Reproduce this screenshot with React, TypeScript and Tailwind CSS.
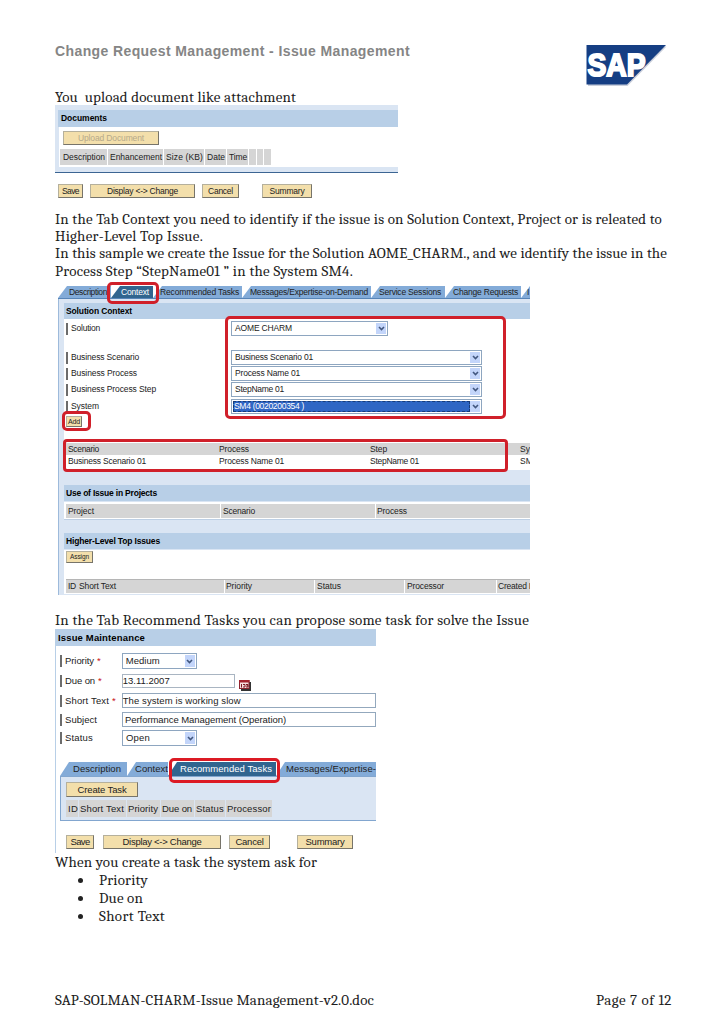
import { useLayoutEffect, useRef } from "react";
import type { ReactNode } from "react";

/** A single line of text whose tracking is spread over a fixed measure. */
function Fit({ w, children, className = "" }: { w: number; children: string; className?: string }) {
  const ref = useRef<HTMLSpanElement>(null);
  useLayoutEffect(() => {
    const el = ref.current;
    if (!el) return;
    el.style.letterSpacing = "0px";
    const natural = el.getBoundingClientRect().width;
    el.style.letterSpacing = `${(w - natural) / children.length}px`;
  }, [w, children]);
  return (
    <span ref={ref} className={"inline-block shrink-0 whitespace-pre " + className}>
      {children}
    </span>
  );
}

function Button({ w, className, children }: { w: number; className: string; children: string }) {
  return (
    <div
      className={
        "flex shrink-0 items-center justify-center border border-[#b5b09c] border-r-[#77746a] border-b-[#77746a] bg-[#f3dfab] leading-none " +
        className
      }
    >
      <Fit w={w}>{children}</Fit>
    </div>
  );
}

function Chevron({ className }: { className: string }) {
  return (
    <span className={"flex shrink-0 items-center justify-center bg-[#c3d5fa] " + className}>
      <svg width="7" height="5" viewBox="0 0 7 5">
        <path d="M1 1 L3.5 3.5 L6 1" fill="none" stroke="#42577f" strokeWidth="1.6" />
      </svg>
    </span>
  );
}

function Select({ w, className, children, selected }: { w: number; className: string; children: string; selected?: boolean }) {
  return (
    <div className={"flex shrink-0 items-center border border-[#8ea6c0] bg-white p-px leading-none " + className}>
      {selected ? (
        <span className="flex h-full grow items-center border border-dashed border-[#183c78] bg-[#2f66c4] text-white">
          <Fit w={w}>{children}</Fit>
        </span>
      ) : (
        <span className="flex grow items-center pl-[2px]">
          <Fit w={w}>{children}</Fit>
        </span>
      )}
      <Chevron className="h-full w-[10px]" />
    </div>
  );
}

function Tab({ w, className, children }: { w: number; className: string; children: string }) {
  return (
    <div
      className={
        "flex shrink-0 items-center overflow-hidden leading-none [clip-path:polygon(9px_0,100%_0,100%_100%,0_100%)] " + className
      }
    >
      <Fit w={w}>{children}</Fit>
    </div>
  );
}

function Field({ w, label, className, required, children }: { w: number; label: string; className: string; required?: boolean; children?: ReactNode }) {
  return (
    <div className={"flex shrink-0 items-center leading-none " + className}>
      <div className="flex h-full shrink-0 items-center">
        <span className="h-[12px] w-[2px] bg-[#6c6c6c]" />
        <Fit w={w} className="ml-[3px]">{label}</Fit>
        {required && <span className="ml-[3px] text-[#c81420]">*</span>}
      </div>
      {children}
    </div>
  );
}

function Cell({ w, className, children }: { w: number; className: string; children: string }) {
  return (
    <div className={"flex h-full shrink-0 items-center overflow-hidden bg-[#d5d5d5] leading-none " + className}>
      {children && <Fit w={w}>{children}</Fit>}
    </div>
  );
}

function Documents() {
  return (
    <section className="flex h-[105px] w-[343px] flex-col text-[8.5px] text-[#222]">
      <div className="flex h-[68px] flex-col border-b border-[#3b6593] bg-[#dae5f3] pt-[5px] pl-[3px]">
        <div className="flex h-[17px] shrink-0 items-center bg-[#b8cfe7] pl-[3px] font-bold text-black">
          <Fit w={46}>Documents</Fit>
        </div>
        <div className="ml-px flex h-[40px] shrink-0 flex-col bg-white pt-[4px]">
          <Button w={66} className="ml-[4px] h-[14px] w-[96px] text-[#b5a98a]">Upload Document</Button>
          <div className="mt-[4px] ml-[1px] flex h-[16px] gap-px">
            <Cell w={42} className="w-[47px] pl-[3px]">Description</Cell>
            <Cell w={52} className="w-[55px] pl-[2px]">Enhancement</Cell>
            <Cell w={37} className="w-[40px] pl-[2px]">Size (KB)</Cell>
            <Cell w={18} className="w-[21px] pl-[2px]">Date</Cell>
            <Cell w={18} className="w-[21px] pl-[2px]">Time</Cell>
            <Cell w={0} className="w-[7px]">{""}</Cell>
            <Cell w={0} className="w-[6px]">{""}</Cell>
            <Cell w={0} className="w-[7px]">{""}</Cell>
          </div>
        </div>
      </div>
      <div className="mt-[11px] ml-[3px] flex h-[14px]">
        <Button w={17} className="w-[25px]">Save</Button>
        <Button w={71} className="ml-[7px] w-[105px]">{"Display <-> Change"}</Button>
        <Button w={25} className="ml-[7px] w-[37px]">Cancel</Button>
        <Button w={35} className="ml-[23px] w-[50px]">Summary</Button>
      </div>
    </section>
  );
}

function SolutionContext() {
  return (
    <section className="relative flex h-[310px] w-[475px] flex-col pl-[3px] text-[8.5px] text-[#222]">
      <div className="flex h-[14px] shrink-0 items-stretch overflow-hidden border-b border-[#5785b8] pt-[1px]">
        <Tab w={38} className="w-[53px] bg-[#83abd8] pl-[11px]">Description</Tab>
        <Tab w={28} className="w-[42px] bg-[#31658f] pl-[10px] text-white">Context</Tab>
        <Tab w={79} className="w-[89px] bg-[#83abd8] pl-[7px]">Recommended Tasks</Tab>
        <Tab w={118} className="w-[129px] bg-[#83abd8] pl-[8px]">Messages/Expertise-on-Demand</Tab>
        <Tab w={62} className="w-[74px] bg-[#83abd8] pl-[8px]">Service Sessions</Tab>
        <Tab w={65} className="w-[76px] bg-[#83abd8] pl-[8px]">Change Requests</Tab>
        <Tab w={2} className="w-[9px] bg-[#83abd8] pl-[6px]">I</Tab>
      </div>
      <div className="flex h-[296px] flex-col overflow-hidden border-l border-[#9dbadb] bg-[#dae5f3] pt-[4px] pl-[5px]">
        <div className="flex h-[16px] shrink-0 items-center bg-[#b8cfe7] pl-[2px] font-bold text-black">
          <Fit w={66}>Solution Context</Fit>
        </div>
        <div className="flex h-[151px] shrink-0 flex-col bg-white pl-[2px]">
          <Field w={29} label="Solution" className="mt-[2px] h-[15px]">
            <Select w={57} className="ml-[131px] h-[15px] w-[157px]">AOME CHARM</Select>
          </Field>
          <Field w={68} label="Business Scenario" className="mt-[14px] h-[15px]">
            <Select w={78} className="ml-[92px] h-[15px] w-[251px]">Business Scenario 01</Select>
          </Field>
          <Field w={66} label="Business Process" className="mt-px h-[15px]">
            <Select w={65} className="ml-[94px] h-[15px] w-[251px]">Process Name 01</Select>
          </Field>
          <Field w={85} label="Business Process Step" className="mt-px h-[15px]">
            <Select w={49} className="ml-[75px] h-[15px] w-[251px]">StepName 01</Select>
          </Field>
          <Field w={28} label="System" className="mt-[2px] h-[15px]">
            <Select w={70} selected className="ml-[132px] h-[15px] w-[251px]">{"SM4 (0020200354 )"}</Select>
          </Field>
          <Button w={12} className="mt-[2px] h-[11px] w-[16px] text-[7px]">Add</Button>
          <div className="mt-[16px] flex h-[12px] shrink-0">
            <Cell w={31} className="w-[151px] pl-[2px]">Scenario</Cell>
            <Cell w={30} className="w-[151px] pl-[2px]">Process</Cell>
            <Cell w={17} className="w-[151px] pl-[2px]">Step</Cell>
            <Cell w={10} className="w-[20px] pl-[1px]">Sy</Cell>
          </div>
          <div className="flex h-[13px] shrink-0 items-center leading-none">
            <div className="w-[151px] pl-[2px]"><Fit w={78}>Business Scenario 01</Fit></div>
            <div className="w-[151px] pl-[2px]"><Fit w={65}>Process Name 01</Fit></div>
            <div className="w-[151px] pl-[2px]"><Fit w={49}>StepName 01</Fit></div>
            <div className="w-[11px] overflow-hidden pl-[1px]"><Fit w={13}>SM</Fit></div>
          </div>
        </div>
        <div className="mt-[15px] flex h-[16px] shrink-0 items-center bg-[#b8cfe7] pl-[2px] font-bold text-black">
          <Fit w={91}>Use of Issue in Projects</Fit>
        </div>
        <div className="mt-px flex h-[18px] shrink-0 border-b border-[#bdcfe4] bg-white pt-[2px] pb-px pl-[2px]">
          <Cell w={26} className="w-[154px] pl-[2px]">Project</Cell>
          <Cell w={32} className="ml-px w-[154px] pl-[2px]">Scenario</Cell>
          <Cell w={30} className="ml-px w-[156px] pl-[1px]">Process</Cell>
        </div>
        <div className="mt-[13px] flex h-[16px] shrink-0 items-center bg-[#b8cfe7] pl-[2px] font-bold text-black">
          <Fit w={94}>Higher-Level Top Issues</Fit>
        </div>
        <div className="mt-px flex h-[44px] shrink-0 flex-col bg-white pt-[1px] pl-[2px]">
          <Button w={19} className="h-[12px] w-[27px] text-[6.5px]">Assign</Button>
          <div className="mt-[16px] flex h-[14px] border-t border-[#b5b5b5]">
            <Cell w={8} className="w-[11px] pl-[2px]">ID</Cell>
            <Cell w={37} className="w-[147px] pl-[2px]">Short Text</Cell>
            <Cell w={26} className="ml-px w-[89px] pl-[1px]">Priority</Cell>
            <Cell w={24} className="ml-px w-[89px] pl-[2px]">Status</Cell>
            <Cell w={37} className="ml-px w-[91px] pl-[2px]">Processor</Cell>
            <Cell w={33} className="ml-px w-[33px] pl-[1px]">Created I</Cell>
          </div>
        </div>
      </div>
      <div className="absolute top-[-3px] left-[52px] h-[22px] w-[52px] rounded-[5px] border-[3px] border-[#d0202a]" />
      <div className="absolute top-[31px] left-[170px] h-[103px] w-[281px] rounded-[5px] border-[3px] border-[#d0202a]" />
      <div className="absolute top-[126px] left-[7px] h-[20px] w-[29px] rounded-[5px] border-[3px] border-[#d0202a]" />
      <div className="absolute top-[154px] left-[8px] h-[33px] w-[445px] rounded-[4px] border-[3px] border-[#d0202a]" />
    </section>
  );
}

function CalendarIcon() {
  return (
    <svg className="mt-[9px] ml-[4px] shrink-0" width="12" height="11" viewBox="0 0 12 11">
      <rect x="2" y="2" width="10" height="9" fill="#333" />
      <rect x="0.5" y="0.5" width="9.5" height="8" fill="#f7e0e0" stroke="#8d2530" />
      <rect x="0" y="0" width="10.5" height="2.5" fill="#a5232e" />
      <path d="M2.5 4 V7.5 M4 4.5 H6 V7 H4 M7 4.5 H9 V7 H7 M7.5 5.8 H9" stroke="#7d1822" fill="none" />
    </svg>
  );
}

function IssueMaintenance() {
  return (
    <section className="relative flex h-[224px] w-[321px] flex-col overflow-hidden text-[9.5px] text-[#222]">
      <div className="flex h-[17px] shrink-0 items-center bg-[#b8cfe7] pl-[3px] font-bold text-black">
        <Fit w={87}>Issue Maintenance</Fit>
      </div>
      <div className="flex h-[207px] flex-col border-l border-[#b8cfe7] bg-white pl-[4px]">
        <Field w={29} label="Priority" required className="mt-[7px] h-[16px]">
          <Select w={34} className="ml-[21px] h-[16px] w-[75px]">Medium</Select>
        </Field>
        <Field w={30} label="Due on" required className="mt-[5px] h-[14px]">
          <div className="ml-[20px] flex h-[14px] w-[113px] items-center border border-[#a9b5c2]">
            <Fit w={47}>13.11.2007</Fit>
          </div>
          <CalendarIcon />
        </Field>
        <Field w={44} label="Short Text" required className="mt-[5px] h-[15px]">
          <div className="ml-[6px] flex h-[15px] w-[260px] items-center border border-[#93a8bd]">
            <Fit w={118}>The system is working slow</Fit>
          </div>
        </Field>
        <Field w={32} label="Subject" className="mt-[4px] h-[15px]">
          <div className="ml-[25px] flex h-[15px] w-[260px] items-center border border-[#93a8bd] pl-[2px]">
            <Fit w={161}>Performance Management (Operation)</Fit>
          </div>
        </Field>
        <Field w={28} label="Status" className="mt-[3px] h-[16px]">
          <Select w={24} className="ml-[29px] h-[16px] w-[75px]">Open</Select>
        </Field>
        <div className="mt-[16px] flex h-[14px] shrink-0">
          <Tab w={48} className="w-[67px] bg-[#83abd8] pl-[13px]">Description</Tab>
          <Tab w={33} className="w-[41px] bg-[#83abd8] pl-[8px]">Context</Tab>
          <Tab w={92} className="w-[108px] bg-[#31658f] pl-[12px] text-white">Recommended Tasks</Tab>
          <Tab w={90} className="w-[100px] bg-[#83abd8] pl-[10px]">Messages/Expertise-</Tab>
        </div>
        <div className="flex h-[45px] shrink-0 flex-col border-t border-b border-l border-[#82a6cf] bg-[#dae5f3] pt-[5px] pl-[5px]">
          <Button w={49} className="h-[15px] w-[72px]">Create Task</Button>
          <div className="mt-[3px] flex h-[17px] shrink-0 gap-px">
            <Cell w={10} className="w-[12px] pl-[2px]">ID</Cell>
            <Cell w={44} className="w-[47px] pl-[1px]">Short Text</Cell>
            <Cell w={30} className="w-[33px] pl-[1px]">Priority</Cell>
            <Cell w={30} className="w-[33px] pl-[1px]">Due on</Cell>
            <Cell w={28} className="w-[30px] pl-[1px]">Status</Cell>
            <Cell w={44} className="w-[46px] pl-[1px]">Processor</Cell>
          </div>
        </div>
        <div className="mt-[14px] ml-[6px] flex h-[14px] shrink-0">
          <Button w={19} className="w-[28px]">Save</Button>
          <Button w={79} className="ml-[9px] w-[118px]">{"Display <-> Change"}</Button>
          <Button w={28} className="ml-[8px] w-[41px]">Cancel</Button>
          <Button w={39} className="ml-[27px] w-[56px]">Summary</Button>
        </div>
      </div>
      <div className="absolute top-[129px] left-[114px] h-[25px] w-[111px] rounded-[5px] border-[3px] border-[#dc1a24]" />
    </section>
  );
}

function Bullet({ w, children }: { w: number; children: string }) {
  return (
    <li className="flex h-[18px] items-center">
      <span className="ml-[23px] size-[5px] rounded-full bg-[#222]" />
      <Fit w={w} className="ml-[16px]">{children}</Fit>
    </li>
  );
}

export default function App() {
  return (
    <main className="flex h-[1030px] w-[728px] flex-col overflow-hidden bg-white pl-[55px] font-['Liberation_Sans',sans-serif]">
      <header className="flex h-[88px] shrink-0 items-start justify-between pr-[61px]">
        <Fit w={355} className="mt-[43px] text-[14px] leading-[17px] font-bold text-[#858585]">
          Change Request Management - Issue Management
        </Fit>
        <svg className="mt-[44px]" width="81" height="42" viewBox="0 0 81 42">
          <path d="M2 2.5 H80.5 L41.5 42 H2 Z" fill="#c9cedb" />
          <path d="M0.5 1 H80 L41 40.5 H0.5 Z" fill="#153e83" />
          <text x="1.5" y="32.2" fontSize="32" fontWeight="700" fontFamily="Liberation Sans, sans-serif" fill="#fff" stroke="#fff" strokeWidth="2" textLength="58" lengthAdjust="spacingAndGlyphs">
            SAP
          </text>
        </svg>
      </header>
      <div className="flex grow flex-col font-[Cambria,Caladea,'Liberation_Serif',serif] text-[15px] leading-[17px] text-[#1d1d1d]">
        <p className="h-[17px] shrink-0 pt-px"><Fit w={241}>You  upload document like attachment</Fit></p>
        <div className="h-[105px] shrink-0 font-['Liberation_Sans',sans-serif]"><Documents /></div>
        <div className="flex h-[75px] shrink-0 flex-col pt-px">
          <Fit w={607} className="h-[17px] self-start">In the Tab Context you need to identify if the issue is on Solution Context, Project or is releated to</Fit>
          <Fit w={148} className="h-[17px] self-start">Higher-Level Top Issue.</Fit>
          <Fit w={612} className="h-[18px] self-start">In this sample we create the Issue for the Solution AOME_CHARM., and we identify the issue in the</Fit>
          <Fit w={298} className="h-[18px] self-start">Process Step “StepName01 ” in the System SM4.</Fit>
        </div>
        <div className="shrink-0 font-['Liberation_Sans',sans-serif]"><SolutionContext /></div>
        <p className="mt-[17px] h-[17px] shrink-0"><Fit w={474}>In the Tab Recommend Tasks you can propose some task for solve the Issue</Fit></p>
        <div className="shrink-0 font-['Liberation_Sans',sans-serif]"><IssueMaintenance /></div>
        <p className="mt-px h-[17px] shrink-0"><Fit w={262}>When you create a task the system ask for</Fit></p>
        <ul className="flex flex-col">
          <Bullet w={49}>Priority</Bullet>
          <Bullet w={44}>Due on</Bullet>
          <Bullet w={66}>Short Text</Bullet>
        </ul>
      </div>
      <footer className="flex h-[39px] shrink-0 items-start justify-between pr-[56px] font-[Cambria,Caladea,'Liberation_Serif',serif] text-[15px] leading-[18px] text-[#1d1d1d]">
        <Fit w={319}>SAP-SOLMAN-CHARM-Issue Management-v2.0.doc</Fit>
        <Fit w={76}>Page 7 of 12</Fit>
      </footer>
    </main>
  );
}
